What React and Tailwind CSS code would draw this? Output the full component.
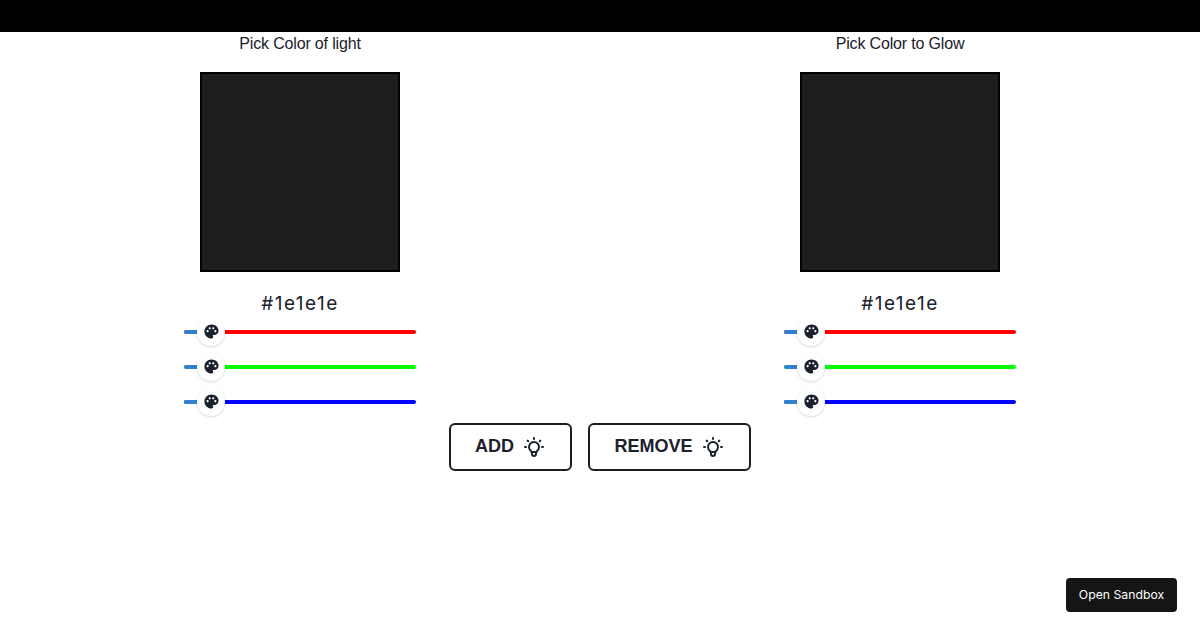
import React from "react";
import { TbBulb } from "react-icons/tb";
import { MdPalette } from "react-icons/md";

function Slider({ color }) {
  return (
    <div className="relative w-[232px] h-[35px] flex items-center">
      <div className="w-full h-1 rounded-sm" style={{ background: color }} />
      <div className="absolute left-0 top-[15.5px] h-1 w-[27px] bg-[#3182ce] rounded-l-sm" />
      <div className="absolute left-[13px] top-[3.5px] w-7 h-7 rounded-full bg-white shadow-[0_1px_3px_rgba(0,0,0,0.1),0_1px_2px_rgba(0,0,0,0.06)] flex items-center justify-center">
        <MdPalette className="text-[#1a202c] text-[17px]" />
      </div>
    </div>
  );
}

function Picker({ title }) {
  return (
    <div className="flex flex-col items-center">
      <div className="h-6 leading-6 text-base tracking-[-0.16px] text-[#1a202c]">{title}</div>
      <div className="w-[200px] h-[200px] mt-4 bg-[#1d1f1e] border-2 border-black" />
      <div className="mt-5 h-[24px] leading-[24px] text-[19px] tracking-[1.5px] text-[#1a202c] font-['Inter',sans-serif]">#1e1e1e</div>
      <div className="mt-[-2px] flex flex-col items-center">
        <Slider color="#ff0000" />
        <Slider color="#00ff00" />
        <Slider color="#0000ff" />
      </div>
    </div>
  );
}

function Btn({ label, w }) {
  return (
    <button className={`${w} h-12 border-2 border-[#1e1e1e] rounded-md bg-white flex items-center justify-center gap-2 text-lg font-bold text-[#1a202c]`}>
      <span className="pb-0.5">{label}</span>
      <TbBulb className="text-[24px] text-[#1a202c]" />
    </button>
  );
}

export default function App() {
  return (
    <div className="font-['Liberation_Sans',Arial,sans-serif] relative w-[1200px] h-[630px] bg-white overflow-hidden">
      <div className="h-8 bg-black" />
      <div className="grid grid-cols-2">
        <Picker title="Pick Color of light" />
        <Picker title="Pick Color to Glow" />
      </div>
      <div className="flex justify-center gap-4 mt-[4px]">
        <Btn label="ADD" w="w-[123px]" />
        <Btn label="REMOVE" w="w-[163px]" />
      </div>
      <div className="absolute left-[1066px] top-[578px] w-[111px] h-[34px] rounded bg-[#151515] text-white flex items-center justify-center text-[12.25px] font-['Inter',sans-serif]">
        Open Sandbox
      </div>
    </div>
  );
}
